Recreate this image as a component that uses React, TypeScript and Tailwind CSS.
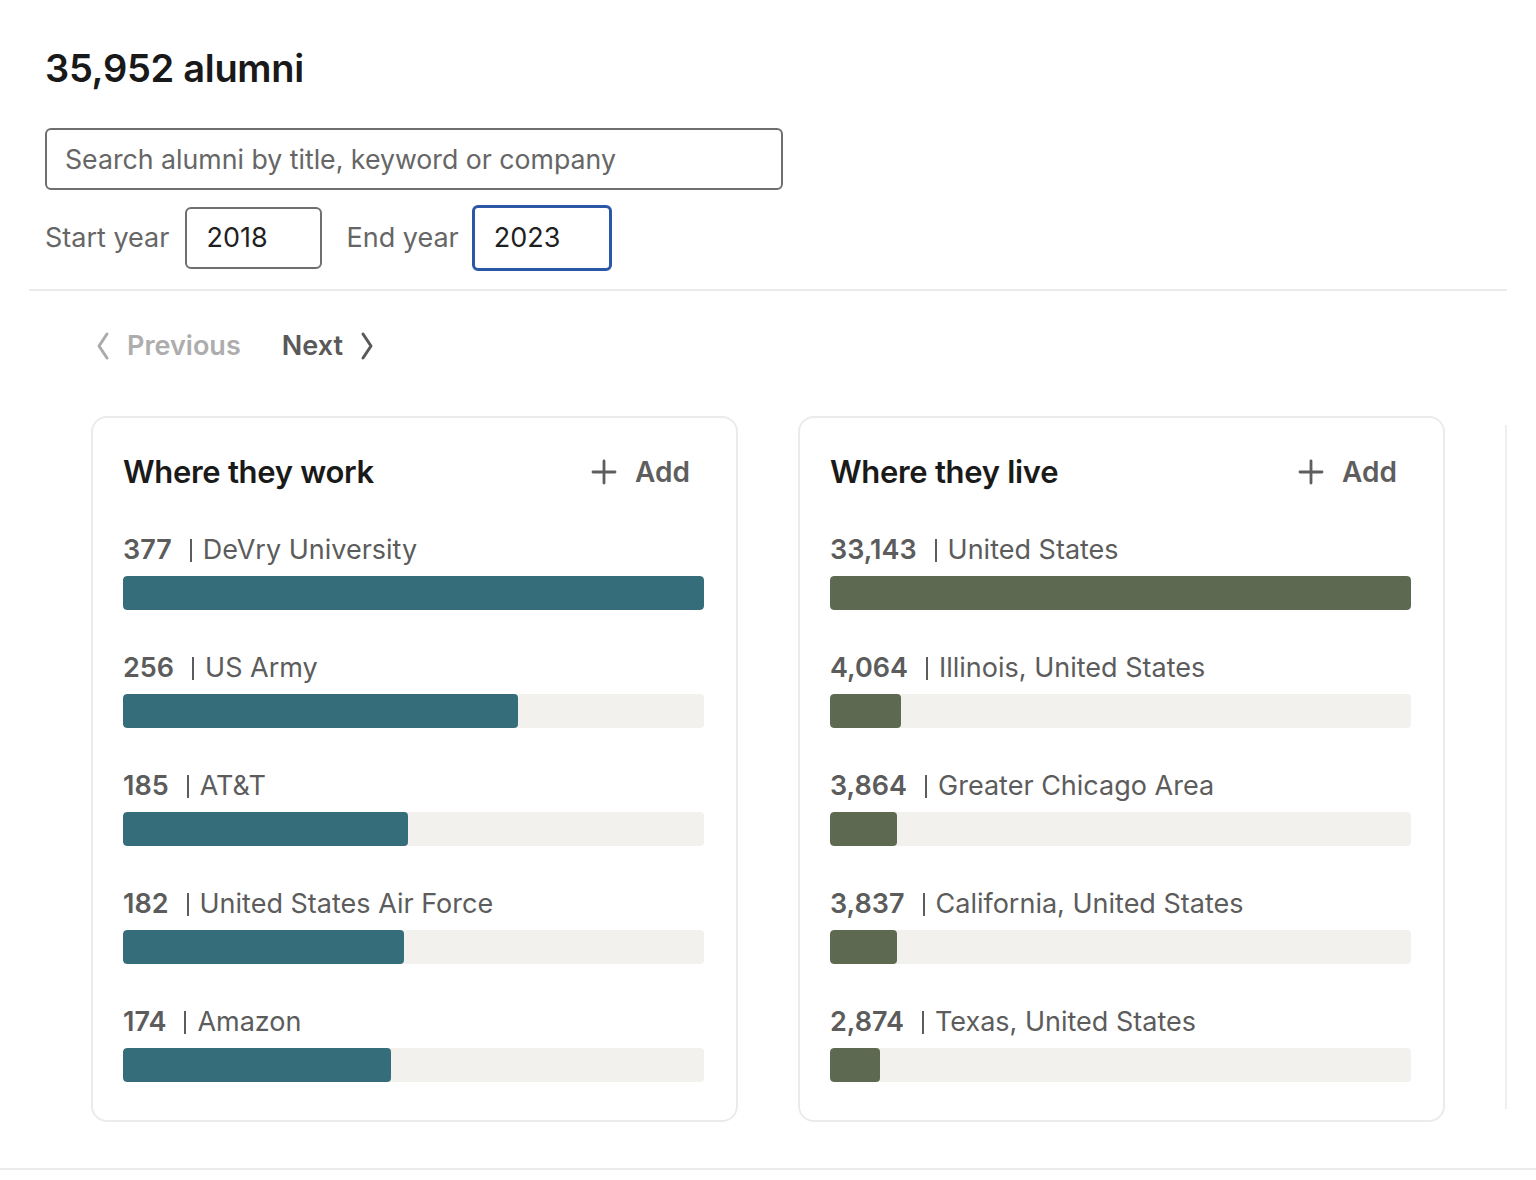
import React from "react";

const work = [
  { n: "377", label: "DeVry University", w: 581 },
  { n: "256", label: "US Army", w: 395 },
  { n: "185", label: "AT&T", w: 285 },
  { n: "182", label: "United States Air Force", w: 281 },
  { n: "174", label: "Amazon", w: 268 },
];
const live = [
  { n: "33,143", label: "United States", w: 581 },
  { n: "4,064", label: "Illinois, United States", w: 71 },
  { n: "3,864", label: "Greater Chicago Area", w: 67 },
  { n: "3,837", label: "California, United States", w: 67 },
  { n: "2,874", label: "Texas, United States", w: 50 },
];

function Card({ title, rows, color }: { title: string; rows: { n: string; label: string; w: number }[]; color: string }) {
  return (
    <div className="w-[647px] h-[706px] rounded-[16px] border-2 border-[#ebebeb] pl-[30px] pr-[30px] pt-[34px]">
      <div className="flex items-center justify-between h-[40px] pr-[16px]">
        <div className="text-[31px] font-semibold text-[#1a1a1a] tracking-[-0.3px]">{title}</div>
        <div className="flex items-center gap-[18px] text-[#5e5e5e]">
          <svg width="26" height="26" viewBox="0 0 26 26" fill="none" stroke="#5e5e5e" strokeWidth="2.8" strokeLinecap="round">
            <path d="M13 2v22M2 13h22" />
          </svg>
          <span className="text-[28px] font-semibold">Add</span>
        </div>
      </div>
      <div className="mt-[41px] flex flex-col gap-[41px]">
        {rows.map((r) => (
          <div key={r.n + r.label}>
            <div className="h-[32px] flex items-center text-[27px] text-[#5c5c5c] leading-none">
              <span className="font-semibold">{r.n}</span>
              <span className="ml-[18px] flex items-center">
                <span className="inline-block w-[2px] h-[23px] bg-[#5c5c5c] mr-[11px] mt-[3px]" />
                {r.label}
              </span>
            </div>
            <div className="mt-[11px] w-[581px] h-[34px] rounded-[4px] bg-[#f2f1ee] overflow-hidden">
              <div className="h-full rounded-[4px]" style={{ width: r.w, backgroundColor: color }} />
            </div>
          </div>
        ))}
      </div>
    </div>
  );
}

export default function App() {
  return (
    <div className="w-[1536px] h-[1180px] bg-white overflow-hidden" style={{ fontFamily: "Inter, 'Noto Sans', sans-serif" }}>
      <div className="pl-[45px] pt-[44px]">
        <h1 className="text-[38px] font-semibold text-[#191919] leading-[48px] tracking-[-0.3px]">35,952 alumni</h1>
        <div className="mt-[36px] w-[738px] h-[62px] rounded-[6px] border-2 border-[#6f6f6f] flex items-center pl-[18px] text-[26.7px] text-[#666]">
          Search alumni by title, keyword or company
        </div>
        <div className="mt-[15px] flex items-center h-[66px]">
          <span className="text-[27px] text-[#666]">Start year</span>
          <div className="ml-[16px] w-[137px] h-[62px] rounded-[6px] border-2 border-[#6f6f6f] flex items-center pl-[19px] text-[27px] text-[#1f1f1f]">2018</div>
          <span className="ml-[24px] text-[27px] text-[#666]">End year</span>
          <div className="ml-[13px] w-[140px] h-[66px] rounded-[6px] border-[3px] border-[#2a57a6] flex items-center pl-[19px] text-[27px] text-[#1f1f1f]">2023</div>
        </div>
      </div>
      <div className="ml-[29px] w-[1478px] mt-[18px] h-[2px] bg-[#ebebeb]" />
      <div className="mt-[38px] pl-[95px] flex items-center h-[34px]">
        <svg width="16" height="30" viewBox="0 0 16 30" fill="none" stroke="#aaaaaa" strokeWidth="3" strokeLinecap="round" strokeLinejoin="round">
          <path d="M12 3L4 15l8 12" />
        </svg>
        <span className="ml-[16px] text-[27px] font-semibold text-[#adadad]">Previous</span>
        <span className="ml-[41px] text-[27px] font-semibold text-[#595959]">Next</span>
        <svg className="ml-[16px]" width="16" height="30" viewBox="0 0 16 30" fill="none" stroke="#595959" strokeWidth="3" strokeLinecap="round" strokeLinejoin="round">
          <path d="M4 3l8 12-8 12" />
        </svg>
      </div>
      <div className="mt-[53px] flex">
        <div className="ml-[91px]">
          <Card title="Where they work" rows={work} color="#356d7a" />
        </div>
        <div className="ml-[60px]">
          <Card title="Where they live" rows={live} color="#5d6a51" />
        </div>
        <div className="ml-[60px] mt-[9px] w-[2px] h-[684px] bg-[#efefef]" />
      </div>
      <div className="mt-[46px] h-[2px] bg-[#ebebeb]" />
    </div>
  );
}
